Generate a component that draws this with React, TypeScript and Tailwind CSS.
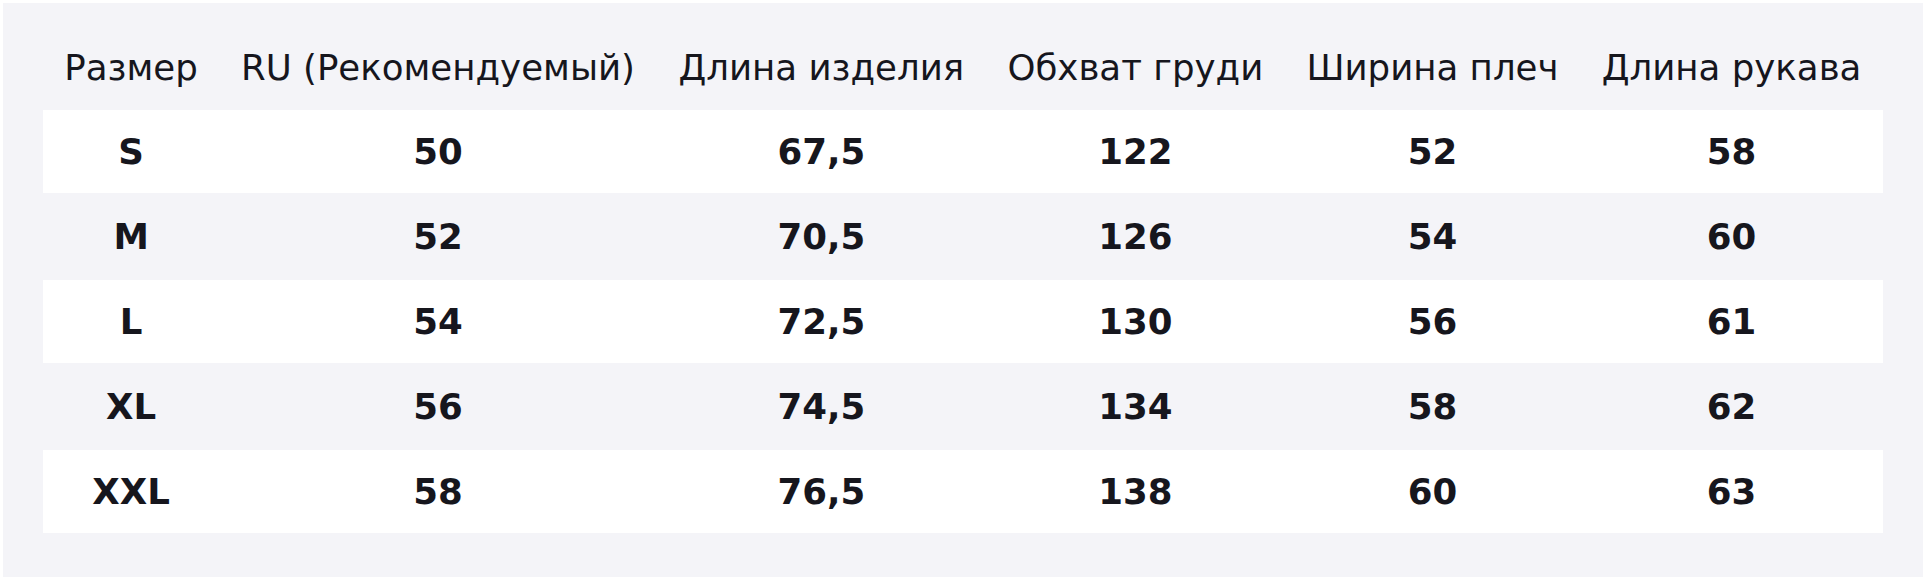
const headers = ['Размер', 'RU (Рекомендуемый)', 'Длина изделия', 'Обхват груди', 'Ширина плеч', 'Длина рукава']

const rows = [
  ['S', '50', '67,5', '122', '52', '58'],
  ['M', '52', '70,5', '126', '54', '60'],
  ['L', '54', '72,5', '130', '56', '61'],
  ['XL', '56', '74,5', '134', '58', '62'],
  ['XXL', '58', '76,5', '138', '60', '63'],
]

export default function App() {
  return (
    <div className="bg-white p-[3px] font-['DejaVu_Sans',sans-serif] text-[#16161d]">
      <div className="bg-[#f4f4f8] px-10 pb-[42px] pt-[38px]">
        <table className="w-full border-separate border-spacing-x-0 border-spacing-y-[2px] text-[35.6px]">
          <thead>
            <tr className="h-[65px]">
              {headers.map((h) => (
                <th key={h} className="whitespace-nowrap px-[21px] pt-[4px] text-center align-top font-normal leading-[42px]">
                  {h}
                </th>
              ))}
            </tr>
          </thead>
          <tbody>
            {rows.map((row, i) => (
              <tr key={row[0]} className={i % 2 === 0 ? 'h-[83px] bg-white' : 'h-[83px]'}>
                {row.map((cell, j) => (
                  <td key={j} className="whitespace-nowrap px-[21px] text-center align-middle font-bold">
                    {cell}
                  </td>
                ))}
              </tr>
            ))}
          </tbody>
        </table>
      </div>
    </div>
  )
}
